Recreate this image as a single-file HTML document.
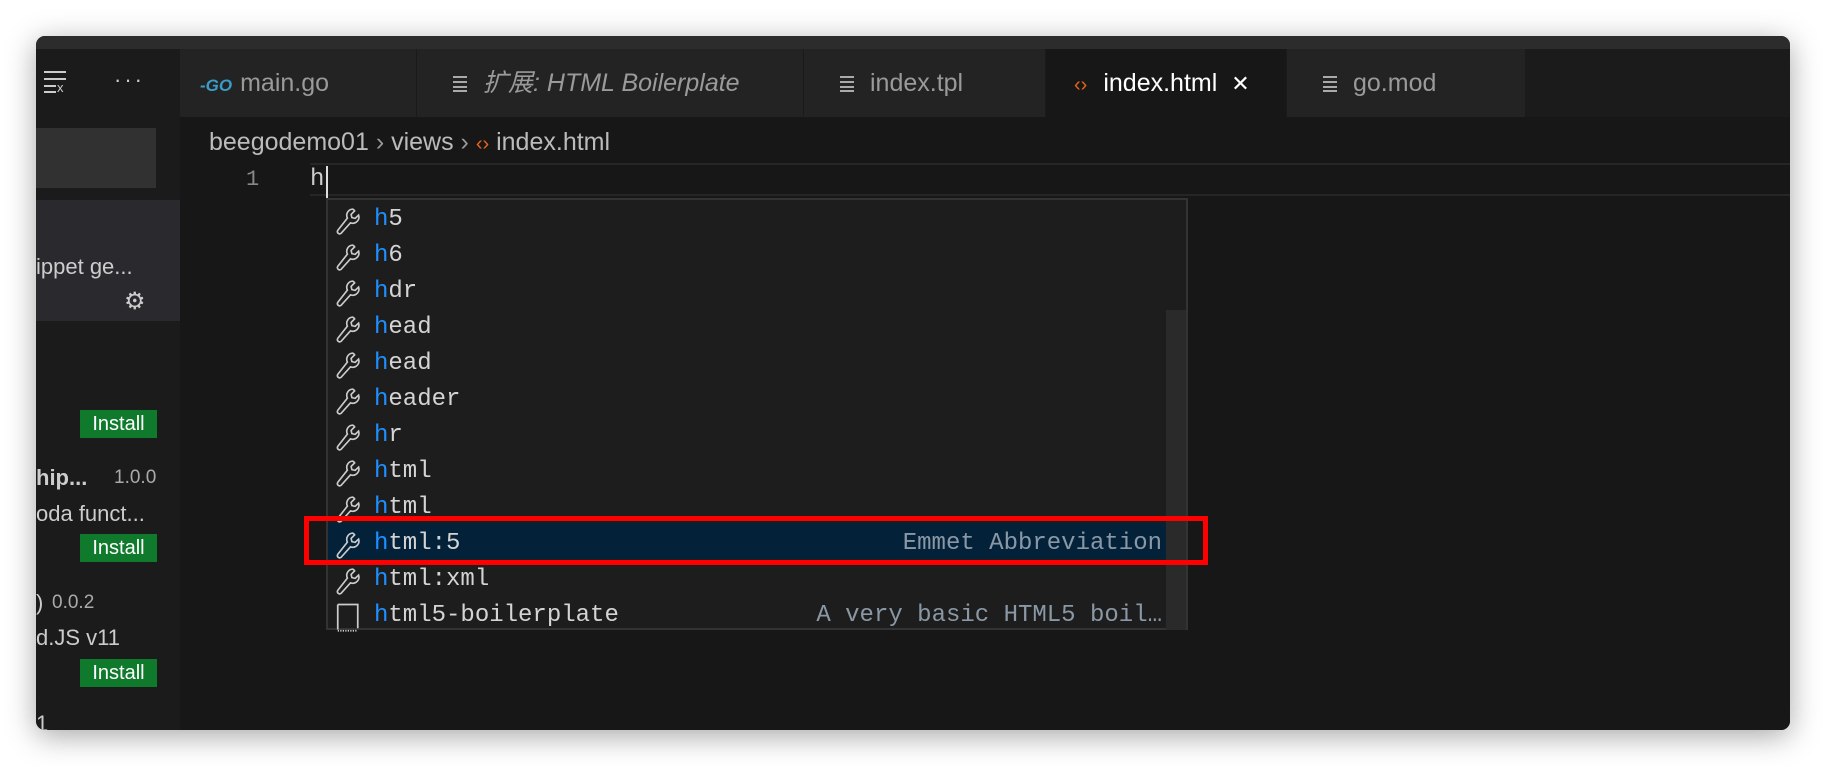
<!DOCTYPE html>
<html><head><meta charset="utf-8"><style>
*{margin:0;padding:0;box-sizing:border-box}
body{width:1826px;height:766px;background:#fff;position:relative;overflow:hidden;font-family:"Liberation Sans","Noto Sans CJK SC",sans-serif}
.win{position:absolute;left:36px;top:36px;width:1754px;height:694px;background:#181818;border-radius:9px;overflow:hidden;box-shadow:0 6px 30px rgba(0,0,0,.35)}
.a{position:absolute}
.title{left:0;top:0;width:100%;height:13px;background:#2c2c2c}
.side{left:0;top:13px;width:144px;height:681px;background:#1b1b1b}
.tabbar{left:144px;top:13px;right:0;height:68px;background:#1b1b1b}
.tab{position:absolute;top:0;height:68px;background:#232323;border-right:1px solid #1a1a1a;color:#9a9a9a;font-size:25px;line-height:68px;white-space:nowrap}
.tab.act{background:#171717;color:#fff}
.lines{display:inline-block;vertical-align:middle;width:14px;height:16px;margin-right:16px;background:linear-gradient(#aaa 0 2px,transparent 2px 5px,#aaa 5px 7px,transparent 7px 10px,#aaa 10px 12px,transparent 12px 14px,#aaa 14px 16px);}
.ed{left:144px;top:81px;right:0;bottom:0;background:#171717}
.sug{font-family:"Liberation Mono",monospace;font-size:24px;color:#d4d4d4}
.row{position:absolute;left:0;width:860px;height:36px;line-height:36px}
.row .t{position:absolute;left:46px}
.row b{color:#1f8fff;font-weight:normal}
.row svg{position:absolute;left:6px;top:4px}
.inst{position:absolute;left:44px;width:77px;height:28px;background:#0f7a2c;color:#fff;font-size:20px;line-height:28px;text-align:center}
.st{position:absolute;color:#ccc;font-size:22px;white-space:nowrap}
</style></head><body>
<div class="win">
<div class="a title"></div>
<div class="a side">
  <div class="a" style="left:8px;top:22px;width:22px;height:22px">
   <div style="position:absolute;left:0;top:0;width:22px;height:2px;background:#ccc"></div>
   <div style="position:absolute;left:0;top:7px;width:22px;height:2px;background:#ccc"></div>
   <div style="position:absolute;left:0;top:14px;width:12px;height:2px;background:#ccc"></div>
   <div style="position:absolute;left:0;top:20px;width:12px;height:2px;background:#ccc"></div>
   <div style="position:absolute;left:13px;top:9px;color:#ccc;font-size:13px">x</div>
  </div>
  <div class="a" style="left:78px;top:18px;color:#ccc;font-size:22px;letter-spacing:3px">···</div>
  <div class="a" style="left:0;top:79px;width:120px;height:60px;background:#313131"></div>
  <div class="a" style="left:0;top:151px;width:144px;height:121px;background:#2a2a2e"></div>
  <div class="st" style="left:0;top:205px">ippet ge...</div>
  <div class="a" style="left:88px;top:238px;color:#ccc;font-size:24px">⚙</div>
  <div class="inst" style="top:361px">Install</div>
  <div class="st" style="left:0;top:416px;font-weight:bold">hip...</div>
  <div class="st" style="left:78px;top:418px;font-size:19px;color:#aaa">1.0.0</div>
  <div class="st" style="left:0;top:452px">oda funct...</div>
  <div class="inst" style="top:485px">Install</div>
  <div class="st" style="left:0;top:541px">)</div>
  <div class="st" style="left:16px;top:543px;font-size:19px;color:#aaa">0.0.2</div>
  <div class="st" style="left:0;top:576px">d.JS v11</div>
  <div class="inst" style="top:610px">Install</div>
  <div class="st" style="left:0;top:662px">1</div>
</div>
<div class="a tabbar">
  <div class="tab" style="left:0;width:237px;padding-left:20px"><span style="color:#3a9cc7;font-weight:bold;font-style:italic;font-size:17px;margin-right:8px">-GO</span>main.go</div>
  <div class="tab" style="left:237px;width:387px;padding-left:36px;font-style:italic"><span class="lines"></span>扩展: HTML Boilerplate</div>
  <div class="tab" style="left:624px;width:242px;padding-left:36px"><span class="lines"></span>index.tpl</div>
  <div class="tab act" style="left:866px;width:241px;padding-left:28px"><span style="color:#e8651a;margin-right:16px;font-size:20px">‹›</span>index.html<span style="margin-left:14px;font-size:22px">✕</span></div>
  <div class="tab" style="left:1107px;width:239px;padding-left:36px"><span class="lines"></span>go.mod</div>
</div>
<div class="a ed">
  <div class="a" style="left:29px;top:11px;color:#bbb;font-size:25px;white-space:nowrap">beegodemo01 <span style="color:#999">›</span> views <span style="color:#999">›</span> <span style="color:#e8651a;font-size:20px">‹›</span> index.html</div>
  <div class="a" style="left:130px;top:46px;right:0;height:33px;border-top:2px solid #262626;border-bottom:2px solid #262626"></div>
  <div class="a" style="left:66px;top:50px;color:#888;font-size:22px;font-family:'Liberation Mono',monospace">1</div>
  <div class="a" style="left:130px;top:49px;color:#ccc;font-size:24px;font-family:'Liberation Mono',monospace">h</div>
  <div class="a" style="left:146px;top:49px;width:2px;height:32px;background:#ddd"></div>
  <div class="a sug" style="left:146px;top:81px;width:862px;height:432px;background:#1d1d1d;border:2px solid #333">
   <div class="a" style="left:838px;top:110px;width:20px;height:320px;background:#2a2a2a"></div>
   <div class="row" style="top:323px;background:#03223a;width:838px"></div>
   <div id="rows"></div>
  </div>
  <div class="a" style="left:124px;top:399px;width:904px;height:49px;border:5px solid #f00"></div>
</div>
</div>
<script>
var items=[["h","5"],["h","6"],["h","dr"],["h","ead"],["h","ead"],["h","eader"],["h","r"],["h","tml"],["h","tml"],["h","tml:5","Emmet Abbreviation"],["h","tml:xml"],["h","tml5-boilerplate","A very basic HTML5 boil…"]];
var w='<svg width="30" height="30" viewBox="0 0 24 24" fill="none" stroke="#ccc" stroke-width="1.3"><path d="M15 2.5a5 5 0 0 0-4.3 7.2L3 19.5a1.8 1.8 0 0 0 2.6 2.4l7.6-8.4a5 5 0 0 0 6.5-6.2l-2.8 2.6-2.6-.6-.6-2.6 2.8-2.8A5 5 0 0 0 15 2.5z"/></svg>';
var b='<svg width="30" height="30" viewBox="0 0 24 24" fill="none" stroke="#ccc" stroke-width="1.4"><path d="M3 2h16v19"/><path d="M3 2v20" /><path d="M3 23h16" stroke-dasharray="1 1"/></svg>';
var h='';
items.forEach(function(it,i){h+='<div class="row" style="top:'+(i*36+2)+'px">'+(i==11?b:w)+'<span class="t"><b>'+it[0]+'</b>'+it[1]+'</span>'+(it[2]?'<span style="position:absolute;right:26px;color:#8a98a6">'+it[2]+'</span>':'')+'</div>';});
document.getElementById('rows').innerHTML=h;
</script>
</body></html>
